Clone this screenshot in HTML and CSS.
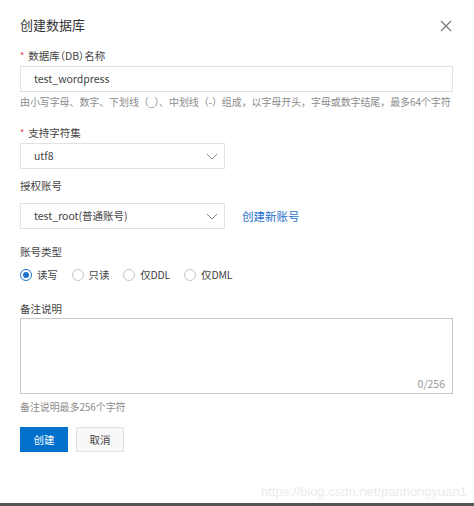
FILE: index.html
```html
<html>
<head>
	<meta charset="UTF-8">
	<link rel="stylesheet" href="styles.css">
</head>

<body>
	<div class="dialog">
		<div class="dialog-header">
			<span class="dialog-title">创建数据库</span>
			<svg class="close-icon" viewBox="0 0 12 12" width="12" height="12">
				<path d="M1 1L11 11M11 1L1 11" stroke="#777" stroke-width="1.2" fill="none"/>
			</svg>
		</div>

		<div class="form">
			<div class="form-item item-name">
				<div class="form-label"><span class="required">*</span>数据库（DB）名称</div>
				<div class="input">test_wordpress</div>
				<div class="form-help">由小写字母、数字、下划线（_）、中划线（-）组成，以字母开头，字母或数字结尾，最多64个字符</div>
			</div>

			<div class="form-item item-charset">
				<div class="form-label"><span class="required">*</span>支持字符集</div>
				<div class="select">
					<span>utf8</span>
					<svg class="chevron" viewBox="0 0 12 7" width="12" height="7">
						<path d="M1 1L6 6L11 1" stroke="#888" stroke-width="1" fill="none"/>
					</svg>
				</div>
			</div>

			<div class="form-item item-account">
				<div class="form-label">授权账号</div>
				<div class="select-row">
					<div class="select">
						<span>test_root(普通账号)</span>
						<svg class="chevron" viewBox="0 0 12 7" width="12" height="7">
							<path d="M1 1L6 6L11 1" stroke="#888" stroke-width="1" fill="none"/>
						</svg>
					</div>
					<a class="link">创建新账号</a>
				</div>
			</div>

			<div class="form-item item-type">
				<div class="form-label">账号类型</div>
				<div class="radio-group">
					<label class="radio checked"><span class="radio-dot"></span>读写</label>
					<label class="radio"><span class="radio-dot"></span>只读</label>
					<label class="radio"><span class="radio-dot"></span>仅DDL</label>
					<label class="radio"><span class="radio-dot"></span>仅DML</label>
				</div>
			</div>

			<div class="form-item item-remark">
				<div class="form-label">备注说明</div>
				<div class="textarea">
					<span class="counter">0/256</span>
				</div>
				<div class="form-help">备注说明最多256个字符</div>
			</div>

			<div class="actions">
				<button class="btn btn-primary">创建</button>
				<button class="btn">取消</button>
			</div>
		</div>

		<div class="watermark">https://blog.csdn.net/panhongyuan1</div>
	</div>
	<div class="bottom-bar"></div>
</body>
</html>
```

FILE: styles.css
```css
body {
	margin: 0;
	padding: 0;
	background-color: #fff;
	font-family: "Noto Sans CJK SC", "Noto Sans", sans-serif;
	color: #444;
}

.dialog {
	position: relative;
	height: 503px;
	box-sizing: border-box;
	padding: 15px 21px 0 20px;
}

.dialog-header {
	display: flex;
	justify-content: space-between;
	align-items: center;
	height: 20px;
}

.dialog-title {
	font-size: 13px;
	line-height: 20px;
	color: #333;
}

.close-icon {
	margin-top: 1px;
	margin-right: 1px;
}

.form {
	margin-top: 14px;
	width: 433px;
}

.form-label {
	font-size: 10.5px;
	line-height: 14px;
	height: 14px;
	color: #444;
	margin-bottom: 3px;
	font-feature-settings: "palt";
}

.required {
	color: #e4393c;
	font-size: 9px;
	margin-right: 4px;
	vertical-align: top;
}

.form-help {
	font-size: 10px;
	line-height: 14px;
	color: #8c8c8c;
	margin-top: 3px;
	white-space: nowrap;
	letter-spacing: -0.1px;
}

.input,
.select {
	box-sizing: border-box;
	height: 26px;
	border: 1px solid #e2e2e2;
	font-size: 10.5px;
	line-height: 24px;
	color: #444;
	padding-left: 13px;
}

.select {
	width: 205px;
	display: flex;
	justify-content: space-between;
	align-items: center;
	padding-right: 6px;
}

.chevron {
	display: block;
}

.item-charset {
	margin-top: 17px;
}

.item-account {
	margin-top: 10px;
}

.item-account .form-label {
	margin-bottom: 10px;
}

.select-row {
	display: flex;
	align-items: center;
}

.link {
	color: #1f73cb;
	font-size: 11.5px;
	margin-left: 17px;
	cursor: pointer;
}

.item-type {
	margin-top: 16px;
}

.item-type .form-label {
	margin-bottom: 9px;
}

.radio-group {
	display: flex;
	align-items: center;
	height: 14px;
}

.radio {
	display: inline-flex;
	align-items: center;
	font-size: 10.5px;
	line-height: 14px;
	margin-right: 14px;
	letter-spacing: -0.2px;
}

.radio-dot {
	box-sizing: border-box;
	width: 12px;
	height: 12px;
	border: 1px solid #c4c4c4;
	border-radius: 50%;
	margin-right: 5px;
	position: relative;
}

.radio.checked .radio-dot {
	border-color: #1f73cb;
}

.radio.checked .radio-dot::after {
	content: "";
	position: absolute;
	left: 2px;
	top: 2px;
	width: 6px;
	height: 6px;
	border-radius: 50%;
	background-color: #1f73cb;
}

.item-remark {
	margin-top: 20px;
}

.item-remark .form-label {
	margin-bottom: 2px;
}

.textarea {
	position: relative;
	box-sizing: border-box;
	height: 76px;
	border: 1px solid #c8c8c8;
}

.counter {
	position: absolute;
	right: 7px;
	bottom: 2px;
	font-size: 10.5px;
	line-height: 14px;
	color: #999;
}

.item-remark .form-help {
	margin-top: 6px;
}

.actions {
	margin-top: 13px;
	display: flex;
	gap: 8px;
}

.btn {
	box-sizing: border-box;
	width: 48px;
	height: 25px;
	border: 1px solid #e2e2e2;
	background-color: #f8f8f8;
	color: #444;
	font-family: "Noto Sans CJK SC", "Noto Sans", sans-serif;
	font-size: 10.5px;
	padding: 0;
}

.btn-primary {
	background-color: #0070cc;
	border-color: #0070cc;
	color: #fff;
}

.watermark {
	position: absolute;
	right: 7px;
	bottom: 4px;
	font-family: "Liberation Sans", Arial, sans-serif;
	font-size: 13px;
	color: #ebebeb;
}

.bottom-bar {
	height: 3px;
	background-color: #555;
}
```
